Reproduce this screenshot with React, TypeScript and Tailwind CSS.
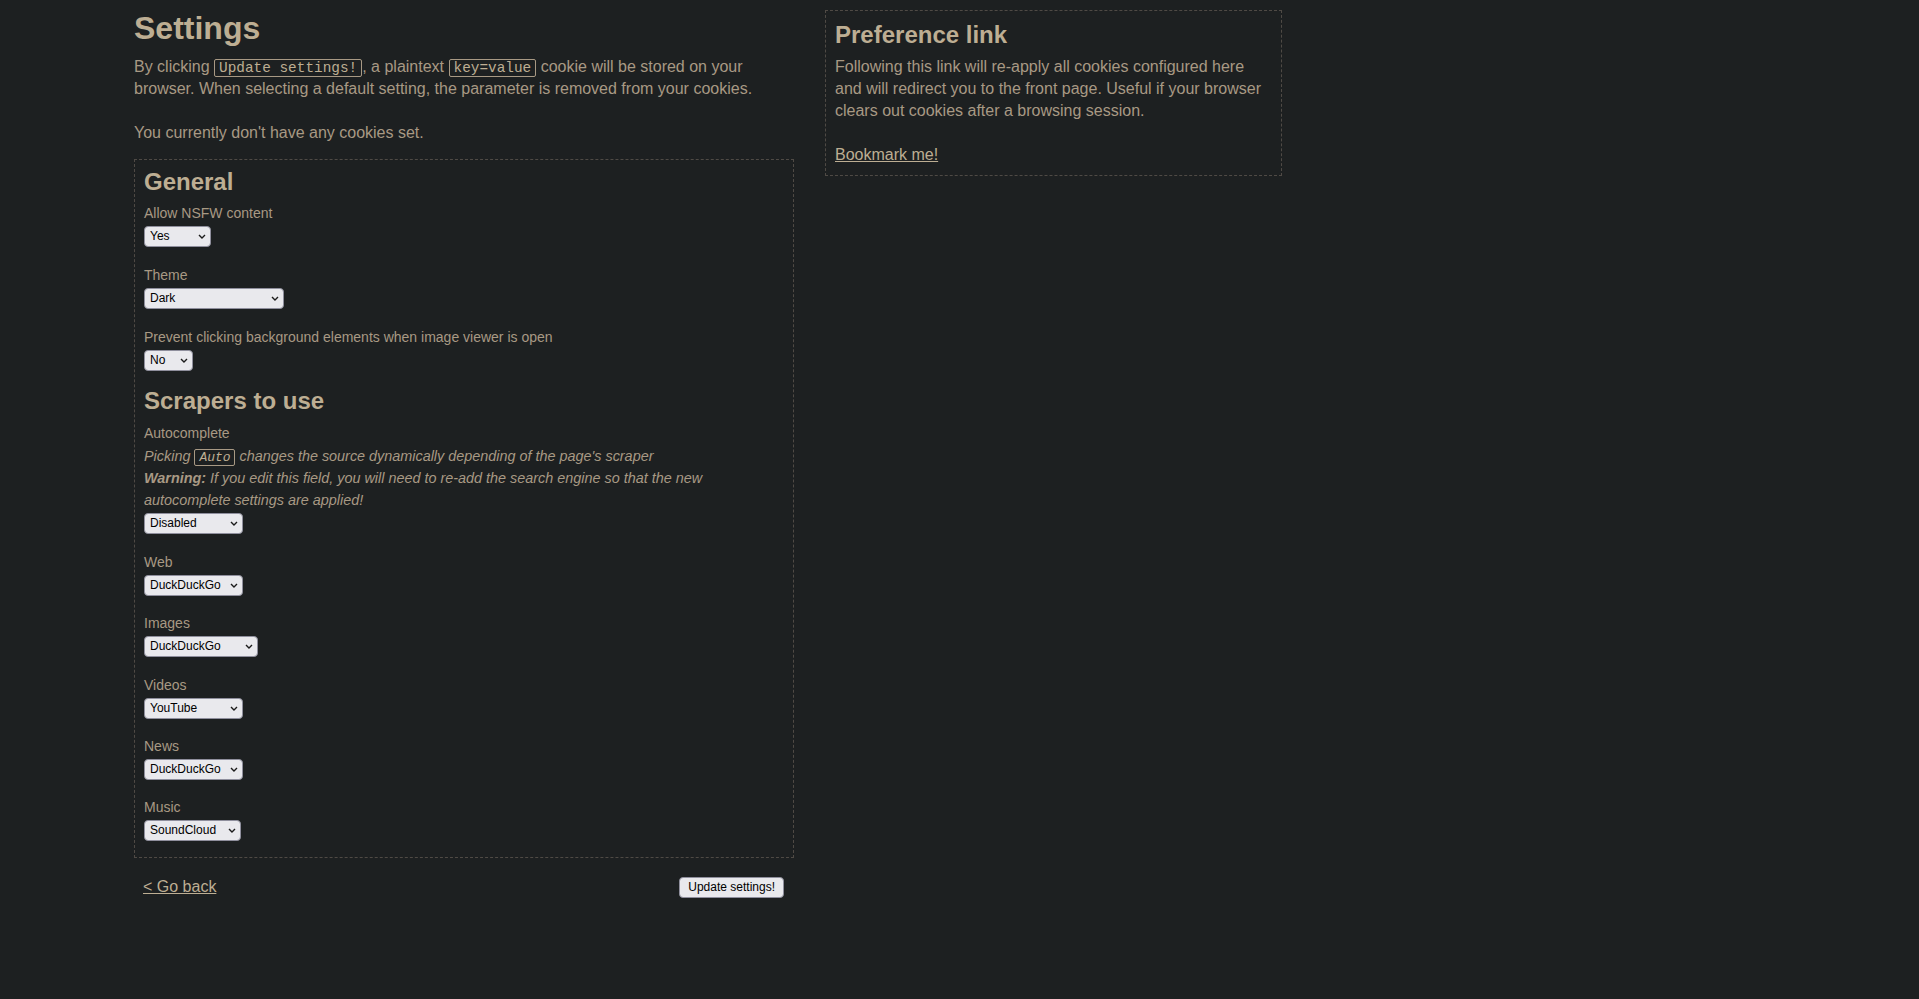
import React from "react";

type SelectProps = { value: string; options: string[]; width: string };

function Select({ value, options, width }: SelectProps) {
  return (
    <div className={`relative mt-[5px] ${width}`}>
      <select
        defaultValue={value}
        className="block h-[21px] w-full appearance-none rounded-[4px] border border-[#8f8f9d] bg-[#e9e9ed] pl-[5px] pr-[18px] font-['Liberation_Sans',Arial,sans-serif] text-[12px] leading-[19px] text-black outline-none"
      >
        {options.map((o) => (
          <option key={o}>{o}</option>
        ))}
      </select>
      <svg
        className="pointer-events-none absolute right-[5px] top-[8px] h-[5px] w-[8px]"
        viewBox="0 0 8 5"
      >
        <path d="M1 1l3 3 3-3" stroke="#1b1b1b" strokeWidth="1.4" fill="none" />
      </svg>
    </div>
  );
}

function Setting({ title, gap = "mb-[20px]", children }: { title: string; gap?: string; children: React.ReactNode }) {
  return (
    <div className={gap}>
      <div className="text-[14px] leading-[16px] text-[#a89984]">{title}</div>
      {children}
    </div>
  );
}

function Code({ children }: { children: React.ReactNode }) {
  return (
    <code className="rounded-[2px] border border-[#a89984] px-[4px] font-['Liberation_Mono',monospace] text-[0.9em] leading-[1] text-[#bdae93]">
      {children}
    </code>
  );
}

export default function App() {
  return (
    <div className="min-h-[999px] bg-[#1d2021] pl-[134px] pt-[10px] font-['Liberation_Sans',Arial,sans-serif] text-[16px] leading-[22px] text-[#a89984]">
      <div className="flex items-start gap-[31px]">
        {/* Left column */}
        <div className="w-[660px]">
          <h1 className="mb-[9px] text-[32px] font-bold leading-[37px] text-[#bdae93]">Settings</h1>
          <p>
            By clicking <Code>Update settings!</Code>, a plaintext <Code>key=value</Code> cookie will be
            stored on your browser. When selecting a default setting, the parameter is removed from your
            cookies.
            <br />
            <br />
            You currently don't have any cookies set.
          </p>

          <div className="mt-[15px] border border-dashed border-[#4f4a45] pl-[9px] pr-[10px] pt-[8px]">
            <h2 className="mb-[9px] text-[24px] font-bold leading-[28px] text-[#bdae93]">General</h2>
            <Setting title="Allow NSFW content">
              <Select value="Yes" options={["Yes", "No"]} width="w-[67px]" />
            </Setting>
            <Setting title="Theme">
              <Select value="Dark" options={["Dark", "Cream"]} width="w-[140px]" />
            </Setting>
            <Setting title="Prevent clicking background elements when image viewer is open">
              <Select value="No" options={["No", "Yes"]} width="w-[49px]" />
            </Setting>

            <h2 className="-mt-[4px] mb-[10px] text-[24px] font-bold leading-[28px] text-[#bdae93]">
              Scrapers to use
            </h2>
            <Setting title="Autocomplete">
              <div className="mt-[4px] text-[14.4px] italic leading-[22px] text-[#a89984]">
                Picking <Code>Auto</Code> changes the source dynamically depending of the page's scraper
                <br />
                <b>Warning:</b> If you edit this field, you will need to re-add the search engine so that
                the new autocomplete settings are applied!
              </div>
              <div className="-mt-[3px]">
                <Select value="Disabled" options={["Disabled", "Auto"]} width="w-[99px]" />
              </div>
            </Setting>
            <Setting title="Web" gap="mb-[19px]">
              <Select value="DuckDuckGo" options={["DuckDuckGo", "Brave"]} width="w-[99px]" />
            </Setting>
            <Setting title="Images">
              <Select value="DuckDuckGo" options={["DuckDuckGo", "Yandex"]} width="w-[114px]" />
            </Setting>
            <Setting title="Videos" gap="mb-[19px]">
              <Select value="YouTube" options={["YouTube", "Vimeo"]} width="w-[99px]" />
            </Setting>
            <Setting title="News" gap="mb-[19px]">
              <Select value="DuckDuckGo" options={["DuckDuckGo", "Google"]} width="w-[99px]" />
            </Setting>
            <div className="pb-[16px]">
              <div className="text-[14px] leading-[16px] text-[#a89984]">Music</div>
              <Select value="SoundCloud" options={["SoundCloud"]} width="w-[97px]" />
            </div>
          </div>

          <div className="mt-[18px] flex items-center justify-between pl-[9px] pr-[10px]">
            <a href="#" className="text-[#bdae93] underline">
              &lt; Go back
            </a>
            <button className="h-[21px] rounded-[4px] border border-[#8f8f9d] bg-[#e9e9ed] px-[8px] text-[12px] leading-[19px] text-black">
              Update settings!
            </button>
          </div>
        </div>

        {/* Right column */}
        <div className="w-[457px] border border-dashed border-[#4f4a45] pb-[9px] pl-[9px] pr-[10px] pt-[10px]">
          <h2 className="mb-[7px] text-[24px] font-bold leading-[28px] text-[#bdae93]">Preference link</h2>
          <p>
            Following this link will re-apply all cookies configured here and will redirect you to the front
            page. Useful if your browser clears out cookies after a browsing session.
            <br />
            <br />
            <a href="#" className="text-[#bdae93] underline">
              Bookmark me!
            </a>
          </p>
        </div>
      </div>
    </div>
  );
}
